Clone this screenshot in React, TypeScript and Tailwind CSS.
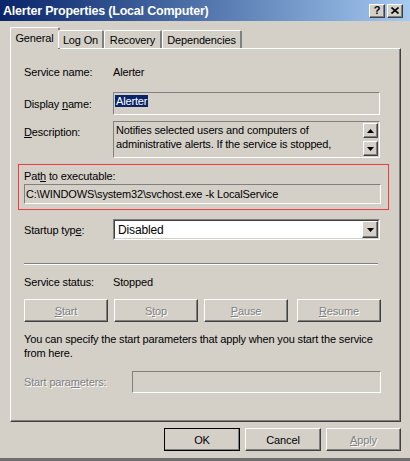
import React from "react";

const raised =
  "border border-t-white border-l-white border-r-[#404040] border-b-[#404040] shadow-[inset_-1px_-1px_0_#808080]";
const sunken =
  "border border-t-[#808080] border-l-[#808080] border-r-white border-b-white";
const disabledText = "text-[#808080] [text-shadow:1px_1px_0_#ffffff]";

function Btn({
  children,
  w,
  disabled,
  def,
}: {
  children: React.ReactNode;
  w: string;
  disabled?: boolean;
  def?: boolean;
}) {
  return (
    <div
      className={`${w} h-[23px] flex items-center justify-center ${
        def ? "outline outline-1 outline-black -outline-offset-1" : ""
      } ${raised} ${disabled ? disabledText : "text-black"}`}
    >
      {children}
    </div>
  );
}

function Tri({ up }: { up?: boolean }) {
  return (
    <svg width="7" height="4" viewBox="0 0 7 4">
      {up ? (
        <polygon points="3.5,0 7,4 0,4" fill="#000" />
      ) : (
        <polygon points="0,0 7,0 3.5,4" fill="#000" />
      )}
    </svg>
  );
}

export default function App() {
  const tabs = [
    { label: "General", w: "w-[50px]", active: true },
    { label: "Log On", w: "w-[46px]", active: false },
    { label: "Recovery", w: "w-[58px]", active: false },
    { label: "Dependencies", w: "w-[80px]", active: false },
  ];

  return (
    <div className="w-[410px] h-[461px] bg-[#d4d0c8] overflow-hidden font-['Liberation_Sans',Arial,sans-serif] text-[11px] tracking-[-0.15px] text-black leading-[14px] flex flex-col">
      {/* title bar */}
      <div className="h-[21px] shrink-0 flex items-center bg-linear-to-r from-[#0a246a] to-[#a6caf0] pl-[3px] pr-[7px]">
        <span className="text-white font-bold text-[12.5px] tracking-[-0.2px]">
          Alerter Properties (Local Computer)
        </span>
        <div className="ml-auto flex gap-[2px]">
          <div
            className={`w-[16px] h-[14px] bg-[#d4d0c8] flex items-center justify-center font-bold text-[11px] leading-none ${raised}`}
          >
            ?
          </div>
          <div
            className={`w-[16px] h-[14px] bg-[#d4d0c8] flex items-center justify-center ${raised}`}
          >
            <svg width="8" height="7" viewBox="0 0 8 7">
              <path d="M0.5 0.5 L7.5 6.5 M7.5 0.5 L0.5 6.5" stroke="#000" strokeWidth="1.6" />
            </svg>
          </div>
        </div>
      </div>

      {/* tabs */}
      <div className="mt-[6px] ml-[12px] h-[21px] flex items-end relative z-10">
        {tabs.map((t) => (
          <div
            key={t.label}
            className={`${t.w} flex items-center justify-center bg-[#d4d0c8] rounded-t-[2px] border-t border-l border-t-white border-l-white border-r-2 border-r-[#808080] ${
              t.active ? "h-[22px] -mb-[1px] -ml-[2px] mr-[-2px] pb-[2px]" : "h-[18px]"
            }`}
          >
            {t.label}
          </div>
        ))}
      </div>

      {/* panel */}
      <div
        className={`ml-[10px] w-[391px] h-[374px] shrink-0 border border-t-white border-l-white border-r-[#404040] border-b-[#404040] shadow-[inset_-1px_-1px_0_#808080] pl-[13px] flex flex-col`}
      >
        <div className="mt-[16px] flex h-[14px]">
          <span className="w-[89px]">Service name:</span>
          <span>Alerter</span>
        </div>

        <div className="mt-[13px] flex items-center">
          <span className="w-[89px]">
            Display <u>n</u>ame:
          </span>
          <div className={`w-[267px] h-[23px] ${sunken} pl-[1px] pt-[1px]`}>
            <span className="bg-[#0a246a] text-white px-[1px]">Alerter</span>
          </div>
        </div>

        <div className="mt-[6px] flex items-start">
          <span className="w-[89px] mt-[4px]">
            <u>D</u>escription:
          </span>
          <div className={`w-[267px] h-[37px] ${sunken} flex`}>
            <div className="flex-1 pl-[2px] pt-[1px] leading-[14px]">
              Notifies selected users and computers of
              <br />
              administrative alerts. If the service is stopped,
            </div>
            <div className="flex flex-col gap-[3px] mt-[1px] mr-[1px]">
              <div
                className={`w-[15px] h-[15px] bg-[#d4d0c8] flex items-center justify-center ${raised}`}
              >
                <Tri up />
              </div>
              <div
                className={`w-[15px] h-[15px] bg-[#d4d0c8] flex items-center justify-center ${raised}`}
              >
                <Tri />
              </div>
            </div>
          </div>
        </div>

        <div className="mt-[6px] -ml-[6px] w-[371px] h-[46px] border border-[#e04444] shadow-[0_0_1px_#f0a0a0] pl-[5px] pt-[4px]">
          <div>
            Pat<u>h</u> to executable:
          </div>
          <div className={`mt-[1px] w-[357px] h-[20px] ${sunken} pl-[1px] flex items-center`}>
            C:\WINDOWS\system32\svchost.exe -k LocalService
          </div>
        </div>

        <div className="mt-[9px] flex items-center">
          <span className="w-[89px]">
            Startup typ<u>e</u>:
          </span>
          <div className="w-[267px] h-[21px] bg-white border border-t-[#808080] border-l-[#808080] border-r-white border-b-white">
            <div className="h-full border border-t-[#404040] border-l-[#404040] border-r-[#d4d0c8] border-b-[#d4d0c8] flex items-center">
              <span className="pl-[3px] flex-1 text-[12px]">Disabled</span>
              <div
                className={`w-[16px] h-[17px] bg-[#d4d0c8] flex items-center justify-center ${raised}`}
              >
                <Tri />
              </div>
            </div>
          </div>
        </div>

        <div className="mt-[23px] w-[354px] border-t border-t-[#808080] border-b border-b-white" />

        <div className="mt-[10px] flex h-[14px]">
          <span className="w-[89px]">Service status:</span>
          <span>Stopped</span>
        </div>

        <div className="mt-[10px] flex">
          <Btn w="w-[84px]" disabled>
            <span>
              <u>S</u>tart
            </span>
          </Btn>
          <div className="w-[6px]" />
          <Btn w="w-[84px]" disabled>
            <span>
              S<u>t</u>op
            </span>
          </Btn>
          <div className="w-[6px]" />
          <Btn w="w-[84px]" disabled>
            <span>
              <u>P</u>ause
            </span>
          </Btn>
          <div className="w-[9px]" />
          <Btn w="w-[84px]" disabled>
            <span>
              <u>R</u>esume
            </span>
          </Btn>
        </div>

        <div className="mt-[10px] w-[360px] leading-[14px]">
          You can specify the start parameters that apply when you start the service from here.
        </div>

        <div className="mt-[11px] flex items-center">
          <span className={`w-[108px] ${disabledText}`}>
            Start para<u>m</u>eters:
          </span>
          <div className={`w-[249px] h-[22px] ${sunken}`} />
        </div>
      </div>

      {/* bottom buttons */}
      <div className="mt-[6px] flex justify-end pr-[9px]">
        <Btn w="w-[76px]" def>
          OK
        </Btn>
        <div className="w-[5px]" />
        <Btn w="w-[76px]">Cancel</Btn>
        <div className="w-[5px]" />
        <Btn w="w-[75px]" disabled>
          <span>
            <u>A</u>pply
          </span>
        </Btn>
      </div>

      <div className="mt-auto h-[3px] bg-[#6e6e6e]" />
    </div>
  );
}
